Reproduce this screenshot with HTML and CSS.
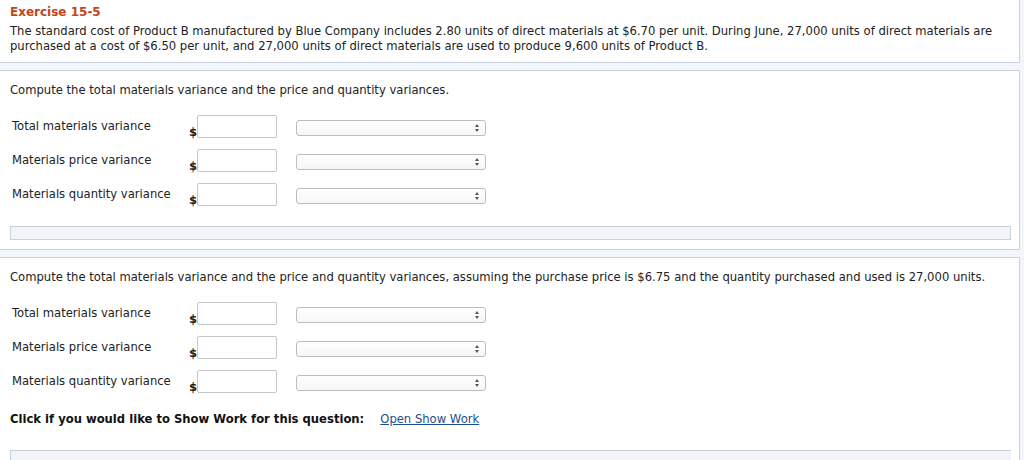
FILE: index.html
```html
<!DOCTYPE html>
<html>
<head>
<meta charset="utf-8">
<link rel="stylesheet" href="styles.css">
</head>
<body>
<div class="box intro">
  <div class="title">Exercise 15-5</div>
  <p class="stmt">The standard cost of Product B manufactured by Blue Company includes 2.80 units of direct materials at $6.70 per unit. During June, 27,000 units of direct materials are purchased at a cost of $6.50 per unit, and 27,000 units of direct materials are used to produce 9,600 units of Product B.</p>
</div>

<div class="box part part1">
  <p class="q">Compute the total materials variance and the price and quantity variances.</p>
  <div class="rows">
    <div class="row"><span class="lbl">Total materials variance</span><span class="dollar">$</span><span class="inp"></span><span class="sel"><span class="arr"></span></span></div>
    <div class="row"><span class="lbl">Materials price variance</span><span class="dollar">$</span><span class="inp"></span><span class="sel"><span class="arr"></span></span></div>
    <div class="row"><span class="lbl">Materials quantity variance</span><span class="dollar">$</span><span class="inp"></span><span class="sel"><span class="arr"></span></span></div>
  </div>
  <div class="bar"></div>
</div>

<div class="box part part2">
  <p class="q">Compute the total materials variance and the price and quantity variances, assuming the purchase price is $6.75 and the quantity purchased and used is 27,000 units.</p>
  <div class="rows">
    <div class="row"><span class="lbl">Total materials variance</span><span class="dollar">$</span><span class="inp"></span><span class="sel"><span class="arr"></span></span></div>
    <div class="row"><span class="lbl">Materials price variance</span><span class="dollar">$</span><span class="inp"></span><span class="sel"><span class="arr"></span></span></div>
    <div class="row"><span class="lbl">Materials quantity variance</span><span class="dollar">$</span><span class="inp"></span><span class="sel"><span class="arr"></span></span></div>
  </div>
  <div class="showwork"><b>Click if you would like to Show Work for this question:</b><a href="#">Open Show Work</a></div>
  <div class="bar bottom"></div>
</div>
</body>
</html>
```

FILE: styles.css
```css
html, body {
  margin: 0;
  padding: 0;
}
body {
  background: #f3f6fa;
  font-family: "DejaVu Sans", Verdana, sans-serif;
  font-size: 11.6px;
  color: #222;
  height: 460px;
  overflow: hidden;
}
.box {
  background: #fff;
  border: 1px solid #c9d2de;
  border-left: none;
  width: 1020px;
}
.intro {
  border-top: none;
  height: 63px;
  box-sizing: border-box;
  padding: 5px 0 0 10px;
}
.title {
  color: #c4441a;
  font-weight: bold;
  font-size: 12px;
  line-height: 14px;
}
.stmt {
  margin: 5px 0 0 0;
  line-height: 15px;
  width: 1000px;
}
.part1 {
  margin-top: 7px;
  height: 180px;
  box-sizing: border-box;
  padding: 12px 0 0 10px;
}
.part2 {
  margin-top: 7px;
  height: 210px;
  box-sizing: border-box;
  padding: 12px 0 0 10px;
}
.q {
  margin: 0;
  line-height: 14px;
}
.rows {
  margin-top: 18px;
  display: flex;
  flex-direction: column;
  gap: 11px;
}
.row {
  display: flex;
  align-items: flex-start;
  height: 23px;
}
.lbl {
  width: 177px;
  padding-left: 2px;
  line-height: 14px;
  padding-top: 4px;
}
.dollar {
  font-weight: bold;
  width: 8px;
  padding-top: 10px;
  line-height: 14px;
}
.inp {
  width: 80px;
  height: 23px;
  border: 1px solid #c6c6c6;
  border-radius: 2px;
  background: #fff;
  box-sizing: border-box;
}
.sel {
  margin-left: 19px;
  margin-top: 5px;
  width: 190px;
  height: 16px;
  border: 1px solid #bdbdbd;
  border-radius: 3px;
  box-sizing: border-box;
  background: linear-gradient(#fff, #f6f6f6);
  position: relative;
}
.arr {
  position: absolute;
  right: 5px;
  top: 3px;
  width: 5px;
  height: 8px;
}
.arr::before, .arr::after {
  content: "";
  position: absolute;
  left: 0;
  border-left: 2.5px solid transparent;
  border-right: 2.5px solid transparent;
}
.arr::before {
  top: 0;
  border-bottom: 3px solid #555;
}
.arr::after {
  bottom: 0;
  border-top: 3px solid #555;
}
.bar {
  margin-top: 20px;
  width: 1001px;
  height: 14px;
  border: 1px solid #c9d2de;
  background: #f1f5f9;
  box-sizing: border-box;
}
.showwork {
  margin-top: 19px;
  line-height: 14px;
}
.showwork b {
  color: #111;
}
.showwork a {
  margin-left: 16px;
  color: #1f4e8c;
  text-decoration: underline;
}
.bar.bottom {
  margin-top: 24px;
  height: 20px;
  border-right: none;
}
```
